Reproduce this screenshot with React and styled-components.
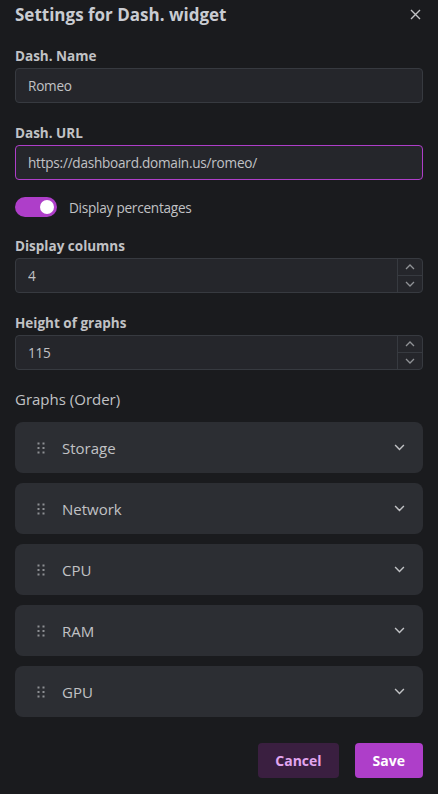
import React, { useState } from 'react';
import styled, { createGlobalStyle } from 'styled-components';

const GlobalStyle = createGlobalStyle`
  html, body {
    margin: 0;
    padding: 0;
    background: #1a1b1e;
  }
  body {
    font-family: "Open Sans", "Noto Sans", sans-serif;
    color: #c1c2c5;
  }
`;

const Panel = styled.div`
  width: 438px;
  height: 794px;
  box-sizing: border-box;
  padding: 0 15px;
  background: #1a1b1e;
  display: flex;
  flex-direction: column;
`;

const Header = styled.div`
  height: 28px;
  display: flex;
  align-items: center;
  justify-content: space-between;
  margin-bottom: 18px;
`;

const Title = styled.h2`
  margin: 0;
  font-size: 17px;
  font-weight: 700;
  color: #c9ccd2;
  letter-spacing: 0;
`;

const CloseButton = styled.button`
  border: 0;
  background: none;
  padding: 0;
  width: 20px;
  height: 20px;
  margin-right: -2px;
  display: flex;
  align-items: center;
  justify-content: center;
  color: #c1c2c5;
  cursor: pointer;
`;

const Field = styled.div`
  display: flex;
  flex-direction: column;
  margin-bottom: ${p => p.$mb || 20}px;
`;

const Label = styled.label`
  font-size: 13.5px;
  font-weight: 700;
  line-height: 20px;
  margin-bottom: 2px;
  color: #c1c2c5;
`;

const InputWrap = styled.div`
  position: relative;
  height: 35px;
  box-sizing: border-box;
  border: 1px solid ${p => (p.$focused ? '#ae3ec9' : '#373a40')};
  border-radius: 4px;
  background: #25262b;
  display: flex;
  align-items: stretch;
`;

const Input = styled.input`
  flex: 1;
  min-width: 0;
  border: 0;
  outline: none;
  background: transparent;
  padding: 0 12px;
  font-family: inherit;
  font-size: 13.6px;
  letter-spacing: -0.25px;
  color: #c1c2c5;
`;

const Stepper = styled.div`
  width: 24px;
  border-left: 1px solid #373a40;
  display: flex;
  flex-direction: column;
`;

const StepButton = styled.button`
  flex: 1;
  border: 0;
  background: none;
  padding: 0;
  display: flex;
  align-items: center;
  justify-content: center;
  color: #909296;
  & + & {
    border-top: 1px solid #373a40;
  }
`;

const SwitchRow = styled.label`
  display: flex;
  align-items: center;
  gap: 12px;
  height: 20px;
  margin-bottom: 19px;
  font-size: 13.6px;
  letter-spacing: -0.25px;
  color: #c1c2c5;
  cursor: pointer;
`;

const Track = styled.span`
  width: 42px;
  height: 20px;
  border-radius: 10px;
  background: ${p => (p.$on ? '#ae3ec9' : '#373a40')};
  display: flex;
  align-items: center;
  justify-content: ${p => (p.$on ? 'flex-end' : 'flex-start')};
  padding: 0 3px;
  box-sizing: border-box;
`;

const Thumb = styled.span`
  width: 14px;
  height: 14px;
  border-radius: 50%;
  background: #fff;
`;

const SectionTitle = styled.div`
  font-size: 15px;
  line-height: 20px;
  color: #c1c2c5;
  margin-bottom: 13px;
`;

const List = styled.div`
  display: flex;
  flex-direction: column;
  gap: 10px;
`;

const Item = styled.div`
  height: 51px;
  border-radius: 8px;
  background: #2c2e33;
  display: flex;
  align-items: center;
  padding: 0 18px 0 22px;
  gap: 17px;
`;

const ItemName = styled.span`
  flex: 1;
  font-size: 15px;
  color: #c1c2c5;
`;

const Footer = styled.div`
  display: flex;
  justify-content: flex-end;
  gap: 16px;
  margin-top: 26px;
`;

const Button = styled.button`
  height: 35px;
  padding: 0 ${p => (p.$primary ? 18 : 17)}px;
  border: 0;
  border-radius: 4px;
  font-family: inherit;
  font-size: 14px;
  font-weight: 700;
  background: ${p => (p.$primary ? '#ae3ec9' : '#3a1f40')};
  color: ${p => (p.$primary ? '#ffffff' : '#e2a5ef')};
  cursor: pointer;
`;

const XIcon = () => (
  <svg width="11" height="11" viewBox="0 0 11 11" fill="none" stroke="currentColor" strokeWidth="1.4">
    <path d="M1 1L10 10M10 1L1 10" />
  </svg>
);

const Chevron = ({ up, size = 10 }) => (
  <svg width={size} height={size * 0.6} viewBox="0 0 10 6" fill="none" stroke="currentColor" strokeWidth="1.3">
    <path d={up ? 'M1 5L5 1L9 5' : 'M1 1L5 5L9 1'} />
  </svg>
);

const DragHandle = () => (
  <svg width="8" height="12" viewBox="0 0 8 12" fill="#8d8f94">
    {[1.5, 6, 10.5].map(y => [
      <rect key={`a${y}`} x="0.5" y={y - 1} width="2" height="2" />,
      <rect key={`b${y}`} x="5.5" y={y - 1} width="2" height="2" />,
    ])}
  </svg>
);

const NumberField = ({ label, value, mb }) => (
  <Field $mb={mb}>
    <Label>{label}</Label>
    <InputWrap>
      <Input defaultValue={value} />
      <Stepper>
        <StepButton><Chevron up /></StepButton>
        <StepButton><Chevron /></StepButton>
      </Stepper>
    </InputWrap>
  </Field>
);

const graphs = ['Storage', 'Network', 'CPU', 'RAM', 'GPU'];

export default function App() {
  const [percent, setPercent] = useState(true);

  return (
    <Panel>
      <GlobalStyle />
      <Header>
        <Title>Settings for Dash. widget</Title>
        <CloseButton><XIcon /></CloseButton>
      </Header>

      <Field>
        <Label>Dash. Name</Label>
        <InputWrap>
          <Input defaultValue="Romeo" />
        </InputWrap>
      </Field>

      <Field $mb={17}>
        <Label>Dash. URL</Label>
        <InputWrap $focused>
          <Input defaultValue="https://dashboard.domain.us/romeo/" />
        </InputWrap>
      </Field>

      <SwitchRow onClick={() => setPercent(!percent)}>
        <Track $on={percent}><Thumb /></Track>
        Display percentages
      </SwitchRow>

      <NumberField label="Display columns" value="4" />
      <NumberField label="Height of graphs" value="115" mb={19} />

      <SectionTitle>Graphs (Order)</SectionTitle>
      <List>
        {graphs.map(g => (
          <Item key={g}>
            <DragHandle />
            <ItemName>{g}</ItemName>
            <Chevron size={11} />
          </Item>
        ))}
      </List>

      <Footer>
        <Button>Cancel</Button>
        <Button $primary>Save</Button>
      </Footer>
    </Panel>
  );
}
